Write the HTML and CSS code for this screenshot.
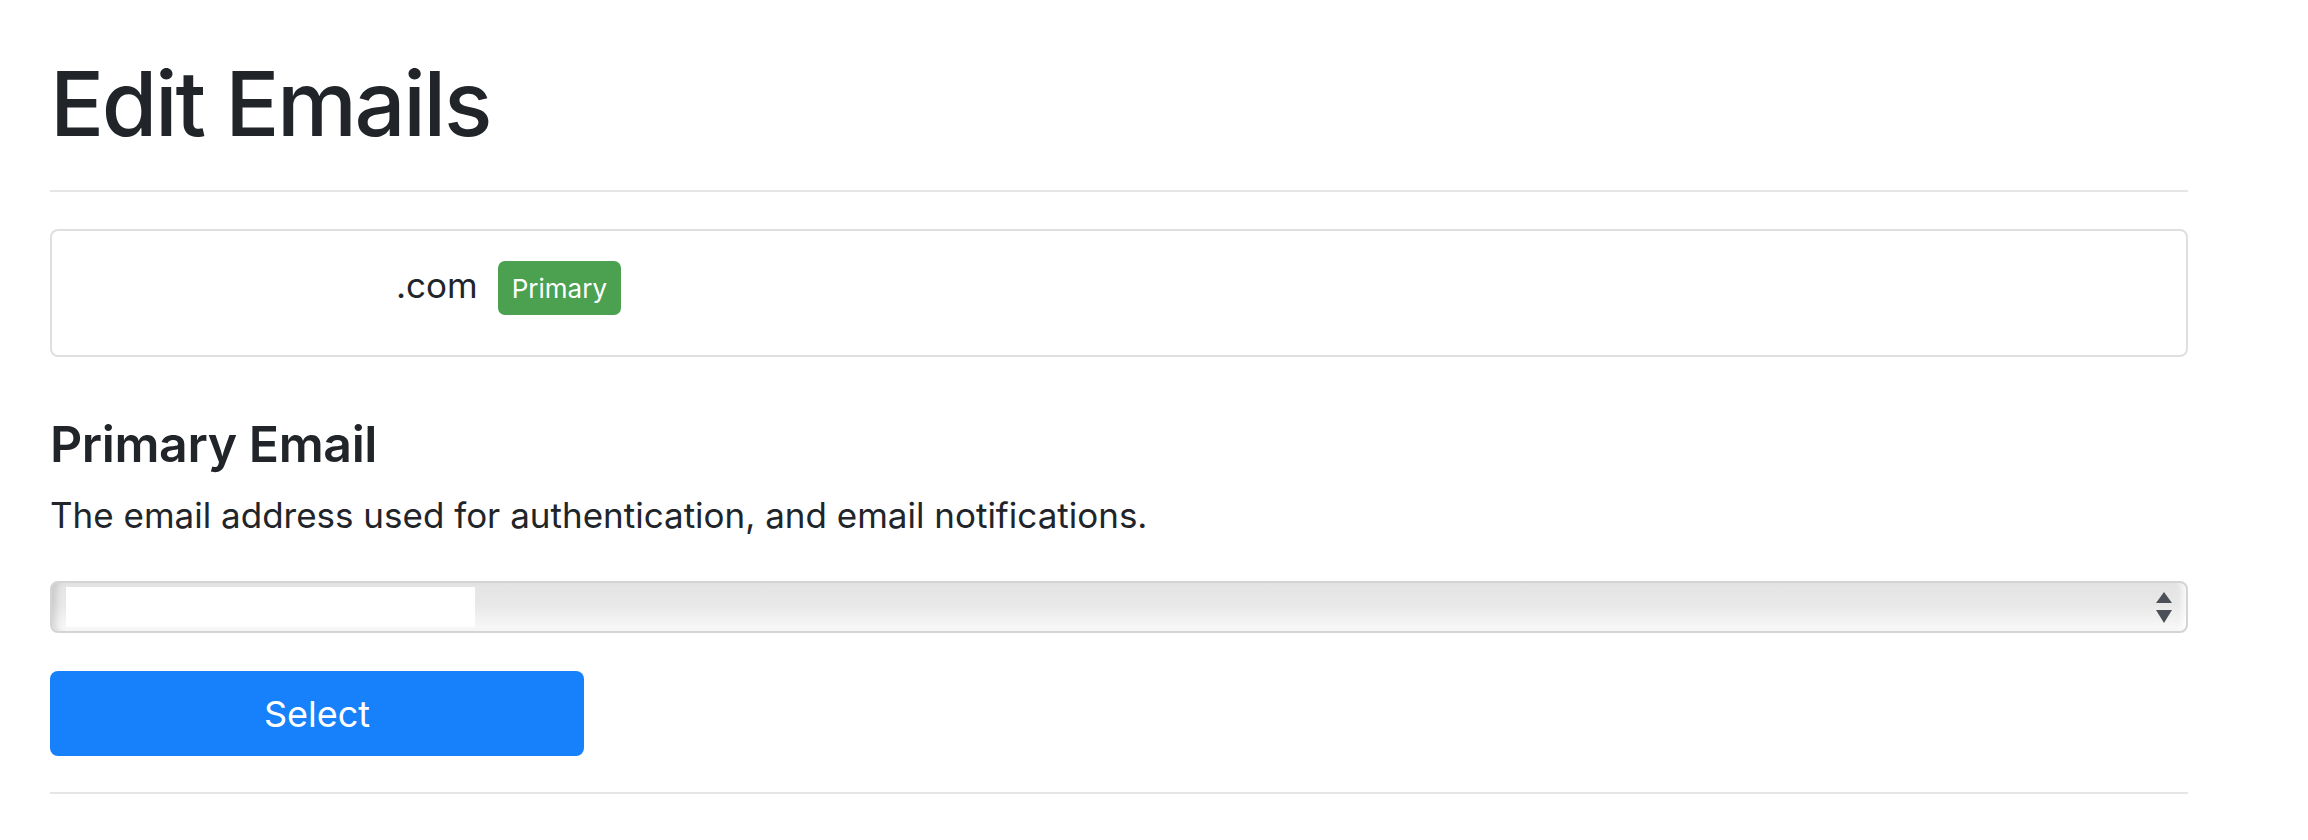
FILE: index.html
```html
<!DOCTYPE html>
<html lang="en">
<head>
<meta charset="utf-8">
<title>Edit Emails</title>
<link rel="stylesheet" href="styles.css">
</head>
<body>
<main class="page">
  <h1 class="title">Edit Emails</h1>
  <hr class="rule rule-top">
  <section class="card">
    <div class="card-body">
      <span class="redacted redacted-email" aria-label="redacted"></span><span class="email-domain">.com</span>
      <span class="badge">Primary</span>
    </div>
  </section>
  <h3 class="section-title">Primary Email</h3>
  <p class="section-text">The email address used for authentication, and email notifications.</p>
  <div class="select">
    <span class="redacted redacted-option" aria-label="redacted"></span>
    <svg class="select-arrows" width="16" height="31" viewBox="0 0 16 31" aria-hidden="true">
      <path d="M8 0 L16 11 L0 11 Z" fill="#4b5058"/>
      <path d="M0 18 L16 18 L8 31 Z" fill="#4b5058"/>
    </svg>
  </div>
  <button class="btn-primary" type="button">Select</button>
  <hr class="rule rule-bottom">
</main>
</body>
</html>
```

FILE: styles.css
```css
html, body {
  margin: 0;
  padding: 0;
  background: #ffffff;
}

body {
  font-family: Inter, "Liberation Sans", sans-serif;
  color: #212529;
}

.page {
  width: 2138px;
  padding: 49px 0 0 50px;
  display: flex;
  flex-direction: column;
}

.title {
  margin: 0;
  font-size: 90px;
  font-weight: 500;
  line-height: 109px;
  letter-spacing: -2.4px;
}

.rule {
  width: 100%;
  height: 2px;
  margin: 0;
  border: 0;
  background: #e6e6e6;
}

.rule-top {
  margin-top: 32px;
}

.rule-bottom {
  margin-top: 36px;
}

.card {
  margin-top: 37px;
  border: 2px solid #dfdfdf;
  border-radius: 8px;
}

.card-body {
  display: flex;
  align-items: baseline;
  padding: 30px 46px 40px 46px;
  font-size: 35px;
}

.redacted {
  display: inline-block;
  background: #ffffff;
}

.redacted-email {
  width: 298px;
  height: 1px;
}

.email-domain {
  line-height: 46px;
}

.badge {
  margin-left: 20px;
  padding: 15px 14px 13px 14px;
  font-size: 26px;
  line-height: 26px;
  font-weight: 400;
  color: #ffffff;
  background: #4ba14f;
  border-radius: 7px;
}

.section-title {
  margin: 56px 0 0 0;
  font-size: 50px;
  font-weight: 600;
  line-height: 62px;
  letter-spacing: -0.4px;
}

.section-text {
  margin: 14px 0 0 0;
  font-size: 35px;
  line-height: 52px;
}

.select {
  box-sizing: border-box;
  margin-top: 40px;
  height: 52px;
  border: 2px solid #d4d4d4;
  border-radius: 8px;
  background: linear-gradient(#e4e4e4 0%, #e8e8e8 45%, #f9f9f9 100%);
  box-shadow: inset 8px 0 7px -4px rgba(0, 0, 0, 0.13), inset -7px 0 6px -4px rgba(255, 255, 255, 0.9);
  display: flex;
  align-items: center;
  justify-content: space-between;
  padding: 0 14px 0 14px;
}

.redacted-option {
  width: 409px;
  height: 40px;
}

.select-arrows {
  display: block;
}

.btn-primary {
  margin-top: 38px;
  width: 534px;
  height: 85px;
  border: 0;
  border-radius: 8px;
  background: #1781fb;
  color: #ffffff;
  font-family: Inter, "Liberation Sans", sans-serif;
  font-size: 36px;
  font-weight: 400;
  display: flex;
  align-items: center;
  justify-content: center;
  padding: 0;
}
```
